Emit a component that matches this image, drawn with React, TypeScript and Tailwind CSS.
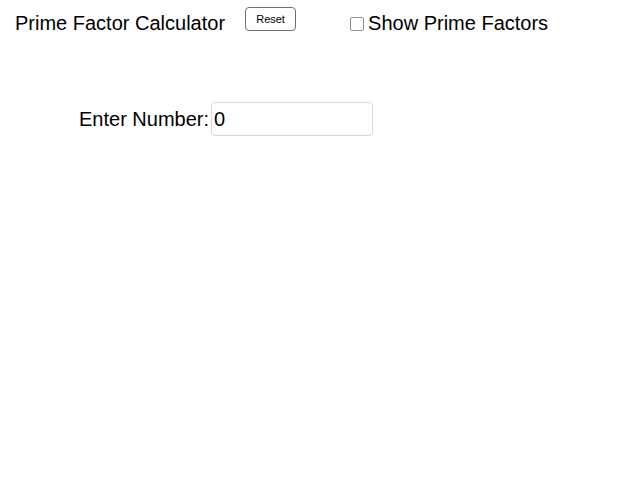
export default function App() {
  return (
    <div
      className="relative h-[492px] w-[638px] bg-white text-black"
      style={{ fontFamily: '"Liberation Sans", Arial, sans-serif' }}
    >
      <div className="flex items-start pt-[12px]">
        <span className="ml-[15px] text-[20px] leading-[23px]">Prime Factor Calculator</span>
        <button className="ml-[20px] mt-[-5px] h-[24px] w-[51px] rounded-[4px] border border-[#6f6f6f] bg-white text-[11px] leading-none">
          Reset
        </button>
        <label className="ml-[54px] flex items-center">
          <span className="h-[14px] w-[14px] rounded-[2px] border border-[#8f8f8f] bg-white" />
          <span className="ml-[4px] text-[20px] leading-[23px]">Show Prime Factors</span>
        </label>
      </div>
      <div className="mt-[67px] flex items-center pl-[79px]">
        <span className="text-[20px] leading-[23px]">Enter Number:</span>
        <div className="ml-[2px] flex h-[34px] w-[162px] items-center rounded-[4px] border border-[#d6d6d6] bg-white pl-[2px] text-[20px]">
          0
        </div>
      </div>
    </div>
  );
}
